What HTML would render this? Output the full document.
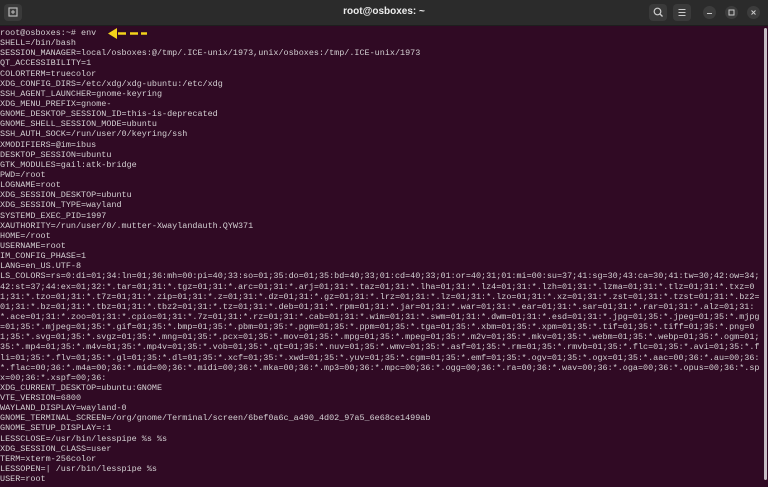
<!DOCTYPE html>
<html><head><meta charset="utf-8"><style>
html,body{margin:0;padding:0;width:768px;height:487px;overflow:hidden;background:#300a24;}
.tb{position:absolute;left:0;top:0;width:768px;height:25px;background:#2b2b2b;border-bottom:1px solid #1e1e1e;}
.title{position:absolute;left:0;width:768px;top:6px;text-align:center;color:#ededed;font:bold 10px "Liberation Sans",sans-serif;}
.btn{position:absolute;top:4px;width:18px;height:17px;border-radius:4px;background:#3a3a3a;}
.circ{position:absolute;top:6px;width:13px;height:13px;border-radius:50%;background:#3c3c3c;}
.term{position:absolute;left:0;top:28px;width:150ch;font-family:"Liberation Mono",monospace;font-size:8.45px;line-height:10.14px;color:#d3d0d2;white-space:pre-wrap;word-break:break-all;}
.sb{position:absolute;left:764px;top:28px;width:3px;height:452px;background:#c8c0c6;border-radius:2px;}
</style></head><body>
<div class="tb">
 <div class="btn" style="left:4px;"><svg width="18" height="17"><rect x="5" y="4" width="8" height="8" fill="none" stroke="#bbb" stroke-width="1.2"/><path d="M9 6v4M7 8h4" stroke="#bbb"/></svg></div>
 <div class="title">root@osboxes: ~</div>
 <div class="btn" style="left:649px;"><svg width="18" height="17"><circle cx="8.5" cy="7.5" r="3.3" fill="none" stroke="#ccc" stroke-width="1.2"/><path d="M11 10l2.5 2.5" stroke="#ccc" stroke-width="1.3"/></svg></div>
 <div class="btn" style="left:673px;"><svg width="18" height="17"><path d="M5.5 5.5h7M5.5 8.5h7M5.5 11.5h7" stroke="#ccc" stroke-width="1.1"/></svg></div>
 <div class="circ" style="left:703px;"><svg width="13" height="13"><path d="M4 7.5h5" stroke="#ccc"/></svg></div>
 <div class="circ" style="left:725px;"><svg width="13" height="13"><rect x="4" y="4" width="5" height="5" fill="none" stroke="#ccc"/></svg></div>
 <div class="circ" style="left:747px;"><svg width="13" height="13"><path d="M4.5 4.5l4 4M8.5 4.5l-4 4" stroke="#ccc"/></svg></div>
</div>
<svg style="position:absolute;left:108px;top:27px" width="40" height="13"><path d="M0 6.5L9 1v11z" fill="#f3d31a"/><path d="M10 6.5h8M22 6.5h8M33 6.5h6" stroke="#f3d31a" stroke-width="2.5"/></svg>
<div class="term">root@osboxes:~# env
SHELL=/bin/bash
SESSION_MANAGER=local/osboxes:@/tmp/.ICE-unix/1973,unix/osboxes:/tmp/.ICE-unix/1973
QT_ACCESSIBILITY=1
COLORTERM=truecolor
XDG_CONFIG_DIRS=/etc/xdg/xdg-ubuntu:/etc/xdg
SSH_AGENT_LAUNCHER=gnome-keyring
XDG_MENU_PREFIX=gnome-
GNOME_DESKTOP_SESSION_ID=this-is-deprecated
GNOME_SHELL_SESSION_MODE=ubuntu
SSH_AUTH_SOCK=/run/user/0/keyring/ssh
XMODIFIERS=@im=ibus
DESKTOP_SESSION=ubuntu
GTK_MODULES=gail:atk-bridge
PWD=/root
LOGNAME=root
XDG_SESSION_DESKTOP=ubuntu
XDG_SESSION_TYPE=wayland
SYSTEMD_EXEC_PID=1997
XAUTHORITY=/run/user/0/.mutter-Xwaylandauth.QYW371
HOME=/root
USERNAME=root
IM_CONFIG_PHASE=1
LANG=en_US.UTF-8
LS_COLORS=rs=0:di=01;34:ln=01;36:mh=00:pi=40;33:so=01;35:do=01;35:bd=40;33;01:cd=40;33;01:or=40;31;01:mi=00:su=37;41:sg=30;43:ca=30;41:tw=30;42:ow=34;42:st=37;44:ex=01;32:*.tar=01;31:*.tgz=01;31:*.arc=01;31:*.arj=01;31:*.taz=01;31:*.lha=01;31:*.lz4=01;31:*.lzh=01;31:*.lzma=01;31:*.tlz=01;31:*.txz=01;31:*.tzo=01;31:*.t7z=01;31:*.zip=01;31:*.z=01;31:*.dz=01;31:*.gz=01;31:*.lrz=01;31:*.lz=01;31:*.lzo=01;31:*.xz=01;31:*.zst=01;31:*.tzst=01;31:*.bz2=01;31:*.bz=01;31:*.tbz=01;31:*.tbz2=01;31:*.tz=01;31:*.deb=01;31:*.rpm=01;31:*.jar=01;31:*.war=01;31:*.ear=01;31:*.sar=01;31:*.rar=01;31:*.alz=01;31:*.ace=01;31:*.zoo=01;31:*.cpio=01;31:*.7z=01;31:*.rz=01;31:*.cab=01;31:*.wim=01;31:*.swm=01;31:*.dwm=01;31:*.esd=01;31:*.jpg=01;35:*.jpeg=01;35:*.mjpg=01;35:*.mjpeg=01;35:*.gif=01;35:*.bmp=01;35:*.pbm=01;35:*.pgm=01;35:*.ppm=01;35:*.tga=01;35:*.xbm=01;35:*.xpm=01;35:*.tif=01;35:*.tiff=01;35:*.png=01;35:*.svg=01;35:*.svgz=01;35:*.mng=01;35:*.pcx=01;35:*.mov=01;35:*.mpg=01;35:*.mpeg=01;35:*.m2v=01;35:*.mkv=01;35:*.webm=01;35:*.webp=01;35:*.ogm=01;35:*.mp4=01;35:*.m4v=01;35:*.mp4v=01;35:*.vob=01;35:*.qt=01;35:*.nuv=01;35:*.wmv=01;35:*.asf=01;35:*.rm=01;35:*.rmvb=01;35:*.flc=01;35:*.avi=01;35:*.fli=01;35:*.flv=01;35:*.gl=01;35:*.dl=01;35:*.xcf=01;35:*.xwd=01;35:*.yuv=01;35:*.cgm=01;35:*.emf=01;35:*.ogv=01;35:*.ogx=01;35:*.aac=00;36:*.au=00;36:*.flac=00;36:*.m4a=00;36:*.mid=00;36:*.midi=00;36:*.mka=00;36:*.mp3=00;36:*.mpc=00;36:*.ogg=00;36:*.ra=00;36:*.wav=00;36:*.oga=00;36:*.opus=00;36:*.spx=00;36:*.xspf=00;36:
XDG_CURRENT_DESKTOP=ubuntu:GNOME
VTE_VERSION=6800
WAYLAND_DISPLAY=wayland-0
GNOME_TERMINAL_SCREEN=/org/gnome/Terminal/screen/6bef0a6c_a490_4d02_97a5_6e68ce1499ab
GNOME_SETUP_DISPLAY=:1
LESSCLOSE=/usr/bin/lesspipe %s %s
XDG_SESSION_CLASS=user
TERM=xterm-256color
LESSOPEN=| /usr/bin/lesspipe %s
USER=root</div>
<div class="sb"></div>
</body></html>
